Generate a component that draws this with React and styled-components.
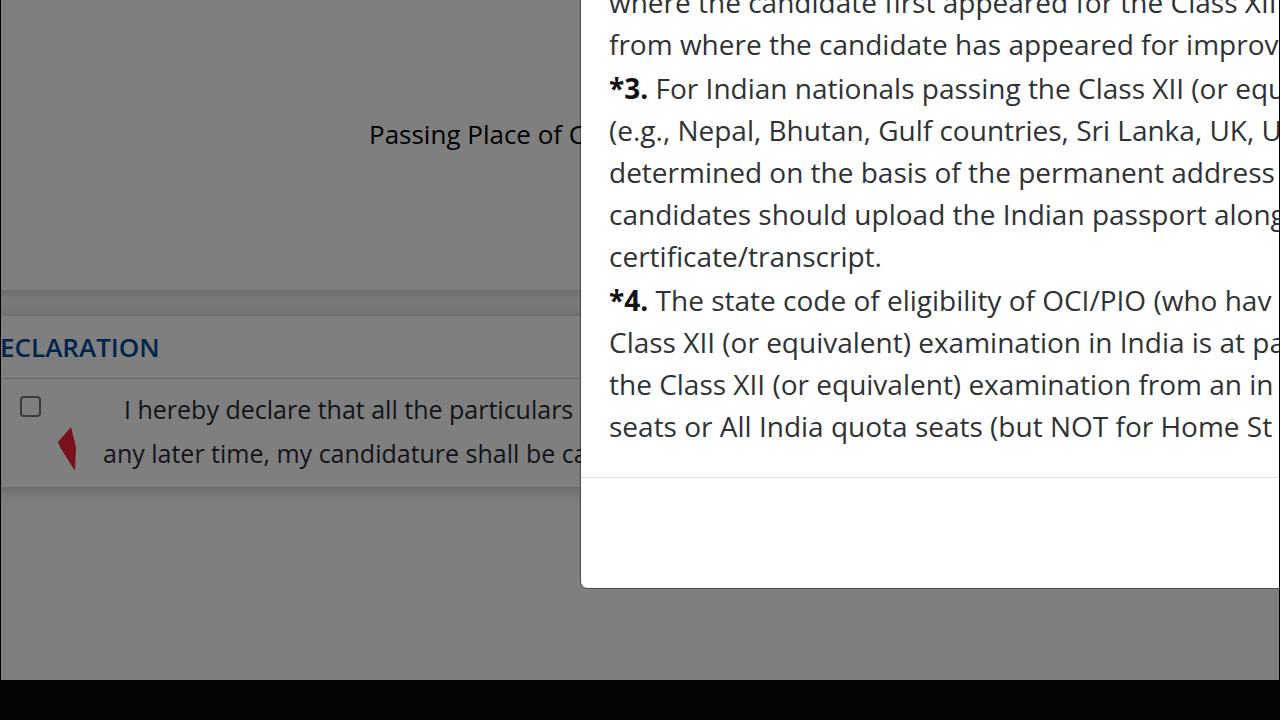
import React from "react";
import styled, { createGlobalStyle } from "styled-components";

const GlobalStyle = createGlobalStyle`
  * { box-sizing: border-box; }
  body {
    margin: 0;
    background: #050505;
    font-family: "Open Sans", "Noto Sans", sans-serif;
  }
`;

const Frame = styled.div`
  height: 100vh;
  display: flex;
  flex-direction: column;
  overflow: hidden;
`;

const Screen = styled.div`
  position: relative;
  flex: 1;
  min-height: 0;
  overflow: hidden;
  background: #fff;
  border: solid #000;
  border-width: 0 1px;
`;

const Taskbar = styled.footer`
  height: 40px;
  flex: none;
  background: #050505;
`;

const Page = styled.main`
  display: flex;
  flex-direction: column;
  gap: 26px;
  margin-left: -32px;
`;

const Card = styled.section`
  background: #fff;
  box-shadow: 0 0 18px rgba(0, 0, 0, 0.28);
  white-space: nowrap;
`;

const PlaceRow = styled.div`
  padding: 115px 0 137px 400px;
  font-size: 26px;
  line-height: 38px;
  font-weight: 500;
  color: #000;
`;

const CardTitle = styled.h2`
  margin: 0;
  padding: 13px 12px;
  border-bottom: 1px solid #d0d0d0;
  font-size: 26px;
  line-height: 36px;
  font-weight: 600;
  color: #004a98;
`;

const Declaration = styled.div`
  display: flex;
  padding: 8px 0 12px 51px;
`;

const Check = styled.input`
  appearance: none;
  flex: none;
  width: 21px;
  height: 21px;
  margin: 9px 16px 0 0;
  border: 2px solid #767676;
  border-radius: 4px;
  background: #fff;
`;

const Arrow = styled.svg`
  flex: none;
  width: 20px;
  height: 44px;
  margin: 40px 26px 0 0;
`;

const DeclarationLabel = styled.label`
  font-size: 25px;
  line-height: 44px;
  color: #2b2b33;
`;

const Indent = styled.span`
  padding-left: 21px;
`;

const Backdrop = styled.div`
  position: absolute;
  inset: 0;
  display: flex;
  align-items: flex-end;
  padding: 0 0 91px 579px;
  background: rgba(0, 0, 0, 0.5);
`;

const Dialog = styled.section`
  flex: 1 0 auto;
  border: 1px solid rgba(0, 0, 0, 0.4);
  border-radius: 7px;
  background: #fff;
  background-clip: padding-box;
`;

const DialogBody = styled.div`
  display: flex;
  flex-direction: column;
  gap: 2px;
  padding: 28px 28px 30px;
  white-space: nowrap;
`;

const Note = styled.p`
  margin: 0;
  font-size: 28px;
  line-height: 42px;
  color: #2f3235;
`;

const DialogFooter = styled.div`
  height: 111px;
  border-top: 1px solid #e0e2e4;
`;

const Bold = styled.b`
  font-weight: 700;
  color: #111;
`;

const notes = [
  {
    lines: [
      "where the candidate first appeared for the Class XII",
      "from where the candidate has appeared for improv",
    ],
  },
  {
    mark: "*3.",
    lines: [
      "For Indian nationals passing the Class XII (or equ",
      "(e.g., Nepal, Bhutan, Gulf countries, Sri Lanka, UK, U",
      "determined on the basis of the permanent address",
      "candidates should upload the Indian passport along",
      "certificate/transcript.",
    ],
  },
  {
    mark: "*4.",
    lines: [
      "The state code of eligibility of OCI/PIO (who hav",
      "Class XII (or equivalent) examination in India is at pa",
      "the Class XII (or equivalent) examination from an in",
      "seats or All India quota seats (but NOT for Home St",
    ],
  },
];

export default function App() {
  return (
    <Frame>
      <GlobalStyle />
      <Screen>
        <Page>
          <Card>
            <PlaceRow>Passing Place of C</PlaceRow>
          </Card>
          <Card>
            <CardTitle>DECLARATION</CardTitle>
            <Declaration>
              <Check type="checkbox" id="declare" />
              <Arrow viewBox="0 0 20 44" aria-hidden="true">
                <path d="M14 0 L1 15 L3 20 L18 44 L19 20 Z" fill="#f02438" />
              </Arrow>
              <DeclarationLabel htmlFor="declare">
                <Indent>I hereby declare that all the particulars s</Indent>
                <br />
                any later time, my candidature shall be ca
              </DeclarationLabel>
            </Declaration>
          </Card>
        </Page>
        <Backdrop>
          <Dialog role="dialog" aria-label="State code of eligibility">
            <DialogBody>
              {notes.map((note, n) => (
                <Note key={n}>
                  {note.mark && <Bold>{note.mark} </Bold>}
                  {note.lines.map((line, i) => (
                    <React.Fragment key={line}>
                      {i > 0 && <br />}
                      {line}
                    </React.Fragment>
                  ))}
                </Note>
              ))}
            </DialogBody>
            <DialogFooter />
          </Dialog>
        </Backdrop>
      </Screen>
      <Taskbar />
    </Frame>
  );
}
